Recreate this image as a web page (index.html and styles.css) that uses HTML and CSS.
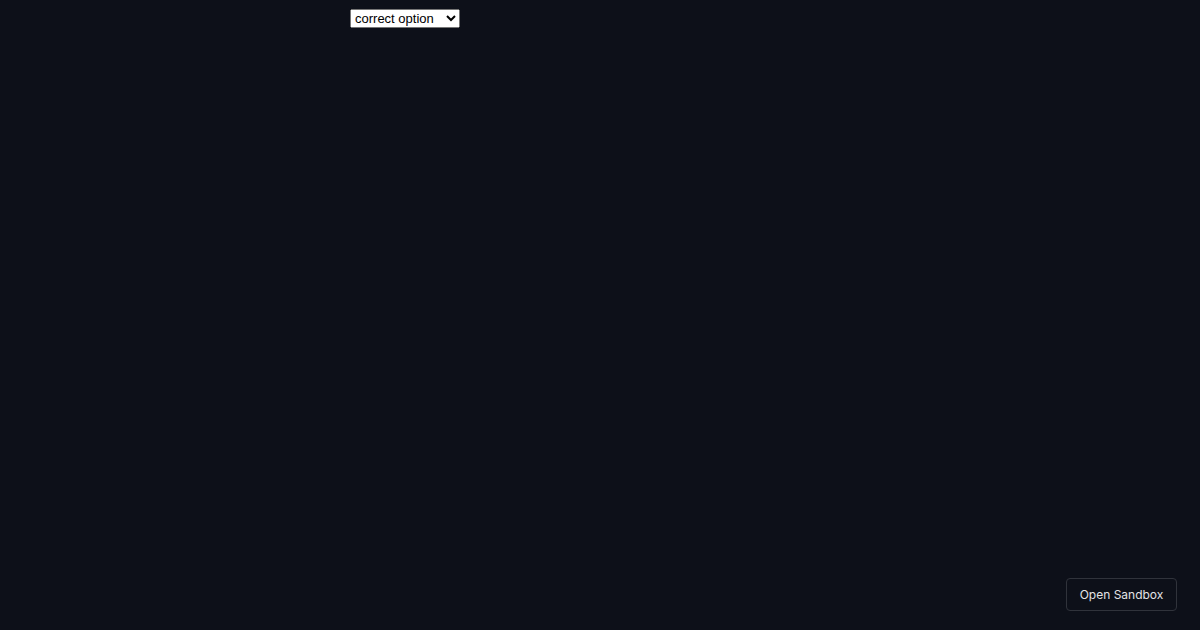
FILE: index.html
```html
<!DOCTYPE html>
<html>
<head>
<meta charset="utf-8">
<link rel="stylesheet" href="styles.css">
</head>
<body>
<div class="page">
  <div class="top">
    <select class="choice">
      <option>correct option</option>
    </select>
  </div>
  <div class="bottom">
    <button class="sandbox">Open Sandbox</button>
  </div>
</div>
</body>
</html>
```
FILE: styles.css
```css
html, body {
  margin: 0;
  padding: 0;
  background: #0d1019;
  height: 100%;
}
.page {
  height: 630px;
  display: flex;
  flex-direction: column;
  justify-content: space-between;
  box-sizing: border-box;
}
.top {
  padding: 9px 0 0 350px;
}
.choice {
  font-family: "Liberation Sans", Arial, sans-serif;
  font-size: 13px;
  height: 19px;
  width: 110px;
  margin: 0;
}
.bottom {
  display: flex;
  justify-content: flex-end;
  padding: 0 23px 19px 0;
}
.sandbox {
  font-family: Inter, "Liberation Sans", sans-serif;
  font-size: 12px;
  color: #e3e3e6;
  background: transparent;
  border: 1px solid #30333b;
  border-radius: 4px;
  width: 111px;
  height: 33px;
  padding: 0;
  cursor: pointer;
}
```
